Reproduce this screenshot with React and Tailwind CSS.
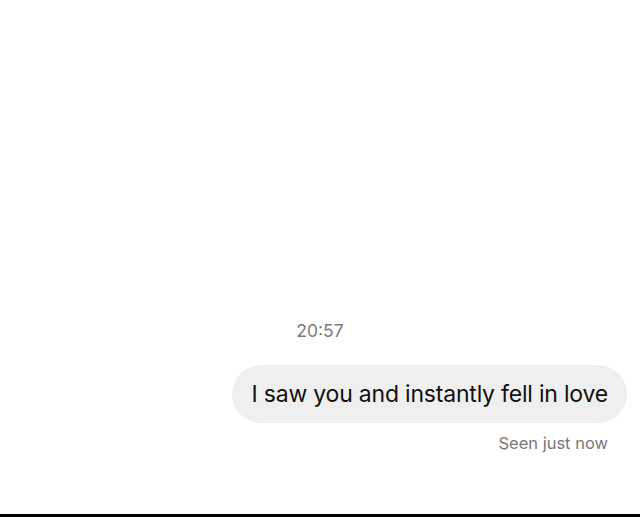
export default function App() {
    return (
        <div className="h-[517px] w-[640px] bg-white flex flex-col overflow-hidden" style={{ fontFamily: 'Inter, "Liberation Sans", sans-serif' }}>
            <div className="flex-1 flex flex-col justify-end pb-[61px]">
                {/* timestamp */}
                <div className="text-center text-[17.5px] leading-[20px] text-[#7b7b7b]">20:57</div>

                {/* outgoing message */}
                <div className="flex justify-end pr-[13px] mt-[24px]">
                    <div className="h-[58px] rounded-full bg-[#efefef] px-[19px] flex items-center text-[23px] text-[#111] tracking-[-0.2px]">
                        I saw you and instantly fell in love
                    </div>
                </div>

                <div className="flex justify-end pr-[32px] mt-[10px] text-[16.5px] leading-[20px] text-[#787878]">
                    Seen just now
                </div>
            </div>
            <div className="h-[3px] bg-black" />
        </div>
    );
}
